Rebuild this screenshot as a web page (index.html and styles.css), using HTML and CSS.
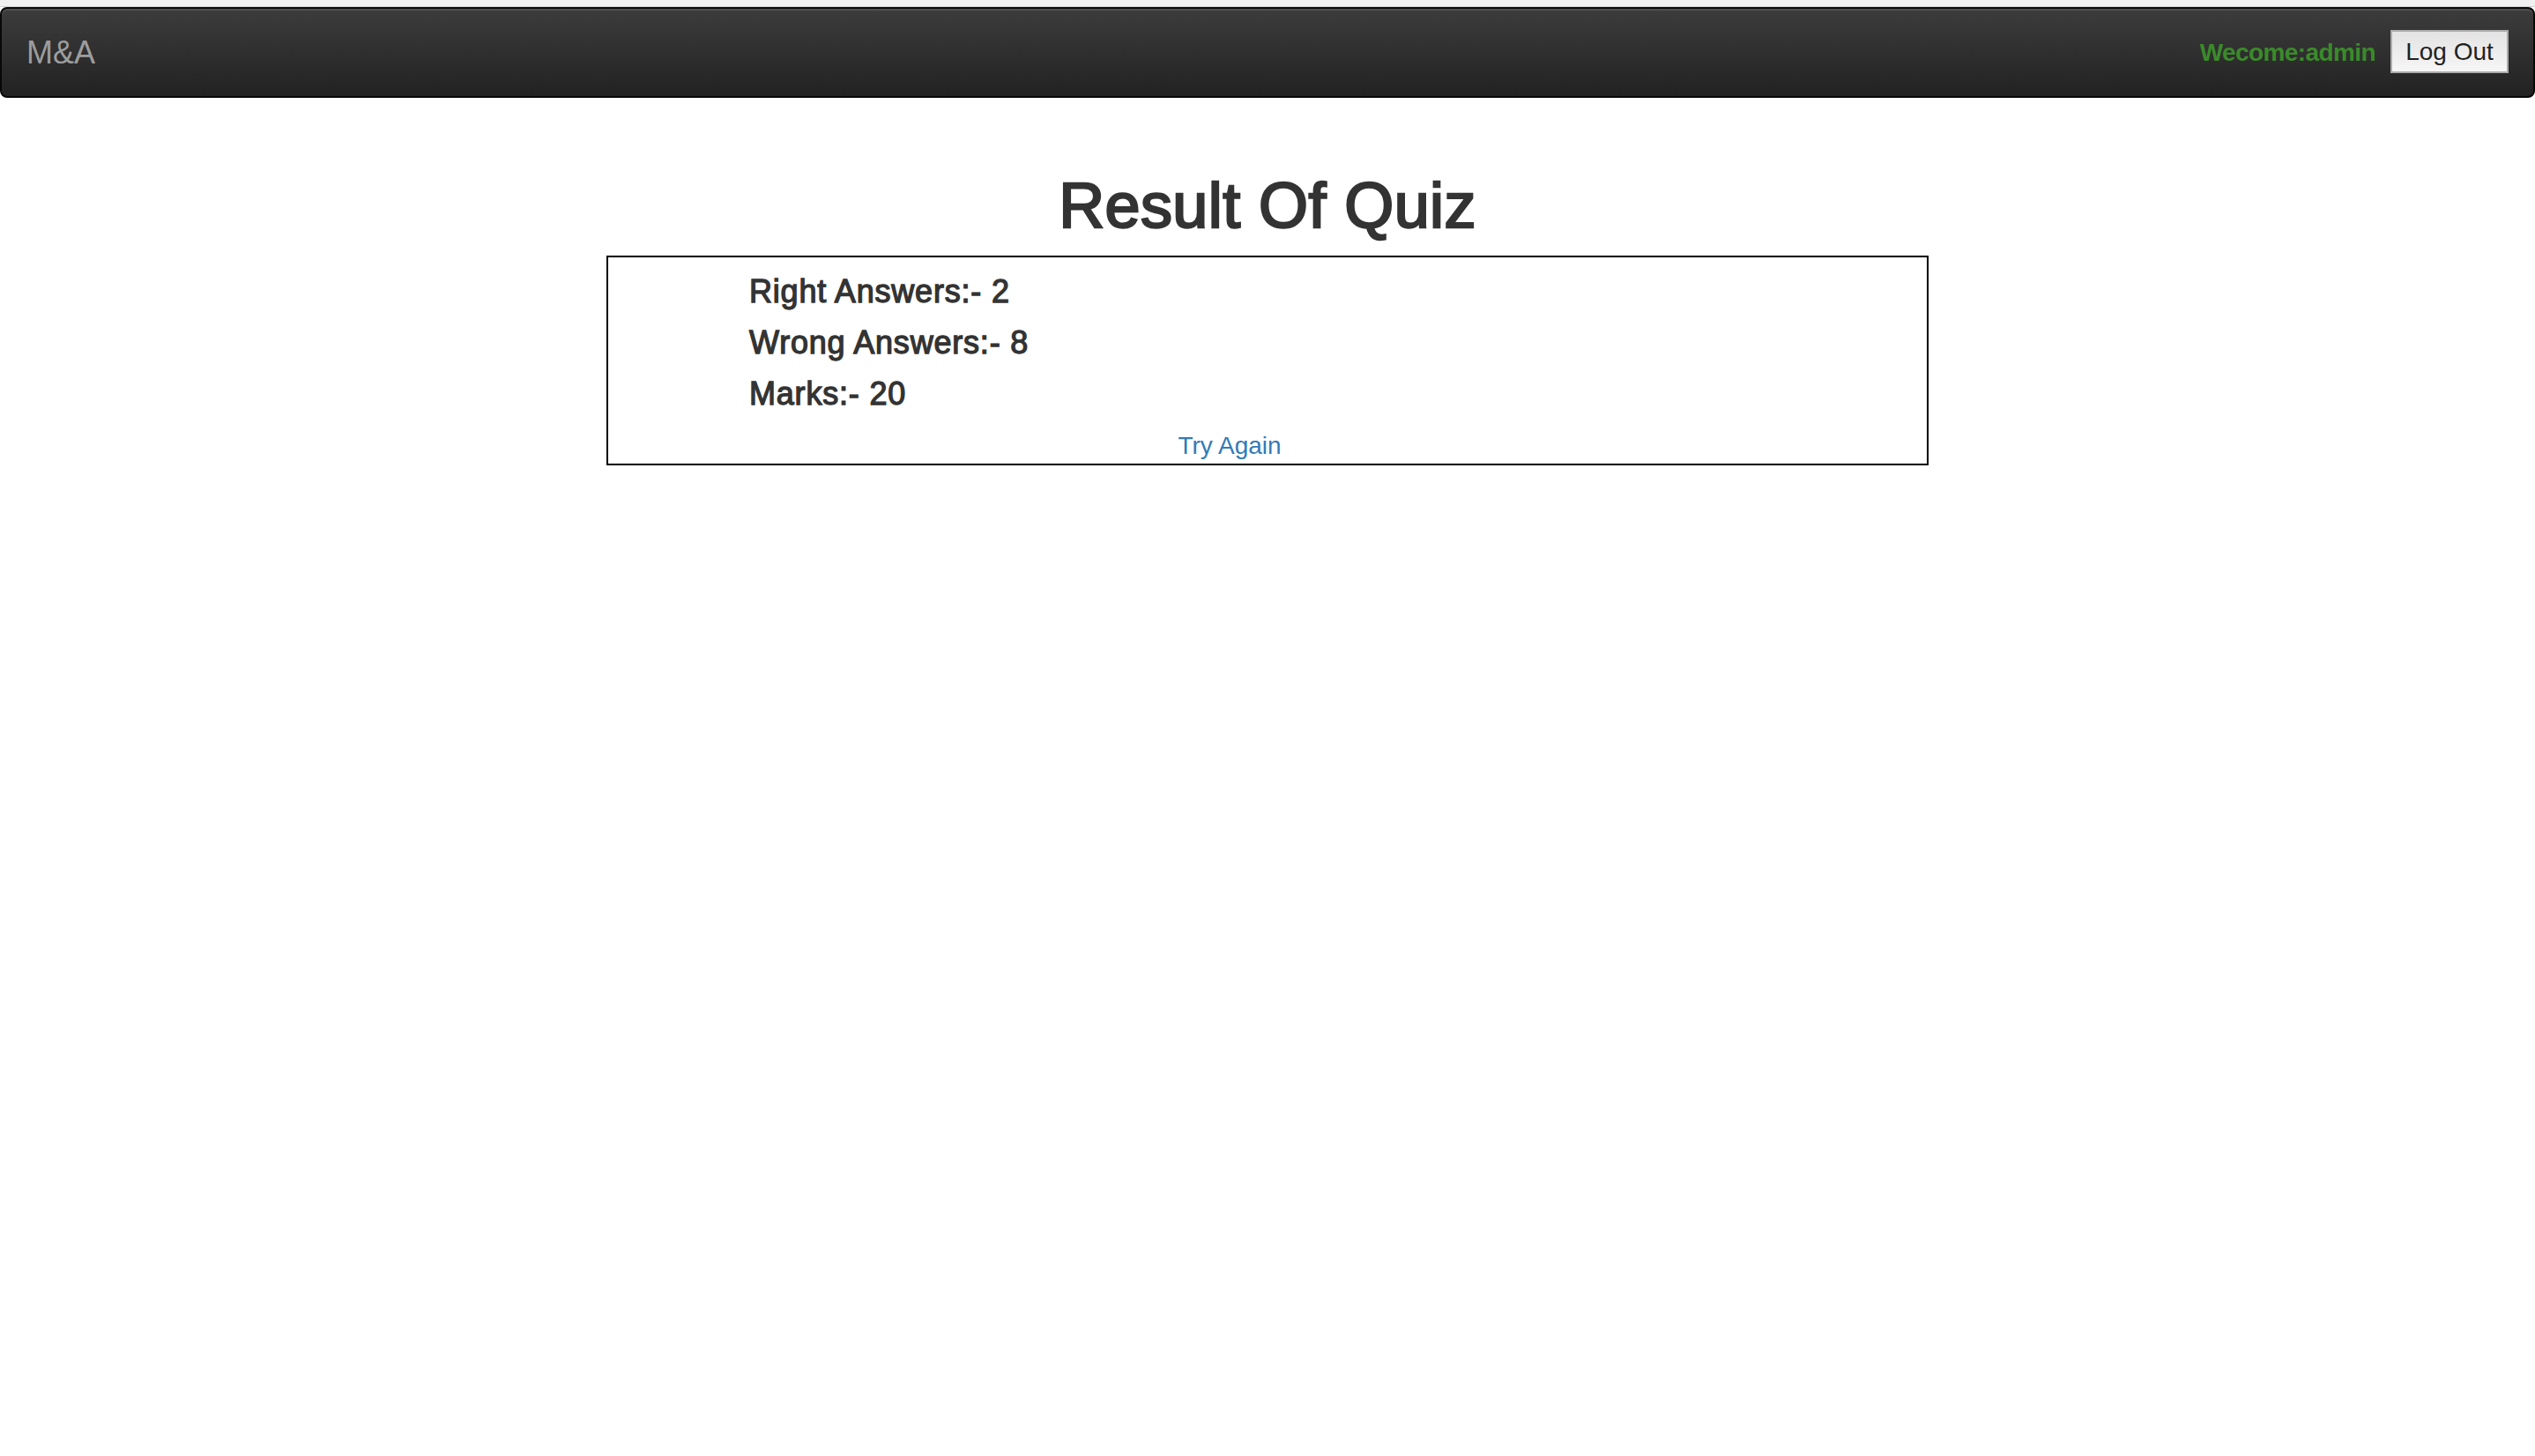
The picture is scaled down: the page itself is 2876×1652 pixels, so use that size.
FILE: index.html
```html
<!DOCTYPE html>
<html lang="en">
<head>
<meta charset="utf-8">
<title>Result Of Quiz</title>
<link rel="stylesheet" href="styles.css">
</head>
<body>
<div class="topstrip"></div>
<nav class="navbar">
  <a class="brand" href="#">M&amp;A</a>
  <div class="nav-right">
    <span class="welcome">Wecome:admin</span>
    <button class="logout" type="button">Log Out</button>
  </div>
</nav>
<main class="content">
  <h1 class="title">Result Of Quiz</h1>
  <section class="result-box">
    <h4 class="result-line">Right Answers:- 2</h4>
    <h4 class="result-line">Wrong Answers:- 8</h4>
    <h4 class="result-line">Marks:- 20</h4>
    <div class="retry"><a href="#">Try Again</a></div>
  </section>
</main>
</body>
</html>
```
FILE: styles.css
```css
html, body {
  margin: 0;
  padding: 0;
  background: #ffffff;
}
body {
  font-family: "Liberation Sans", Arial, Helvetica, sans-serif;
  color: #333333;
}
.topstrip {
  height: 7px;
  background: #f0f0f0;
  border-bottom: 1px solid #d2d2d2;
}
.navbar {
  display: flex;
  align-items: center;
  justify-content: space-between;
  height: 103px;
  box-sizing: border-box;
  border: 2px solid #080808;
  border-radius: 8px;
  background: linear-gradient(to bottom, #3c3c3c 0%, #222222 100%);
  box-shadow: inset 0 2px 0 rgba(255, 255, 255, 0.1);
  padding: 0 28px;
}
.brand {
  font-size: 36px;
  line-height: 40px;
  color: #9d9d9d;
  text-decoration: none;
}
.nav-right {
  display: flex;
  align-items: center;
  gap: 17px;
}
.welcome {
  font-size: 28px;
  line-height: 40px;
  font-weight: bold;
  color: #3b8a2b;
  letter-spacing: -0.6px;
}
.logout {
  width: 134px;
  height: 49px;
  box-sizing: border-box;
  margin: 0 0 2px 0;
  padding: 0;
  border: 2px solid #ababab;
  border-radius: 0;
  background: linear-gradient(to bottom, #e3e3e3 0%, #f6f6f6 100%);
  font-family: "Liberation Sans", Arial, Helvetica, sans-serif;
  font-size: 28px;
  color: #222222;
}
.content {
  display: block;
}
.title {
  margin: 82px 0 17px;
  font-size: 72px;
  line-height: 80px;
  font-weight: 500;
  letter-spacing: 0.4px;
  text-align: center;
  color: #333333;
  -webkit-text-stroke: 2.4px #333333;
}
.result-box {
  width: 1500px;
  box-sizing: border-box;
  margin: 0 auto;
  border: 2px solid #000000;
}
.result-line {
  margin: 20px 0 20px 0;
  padding-left: 160px;
  font-size: 36px;
  line-height: 38px;
  font-weight: 500;
  letter-spacing: 0.8px;
  color: #333333;
  -webkit-text-stroke: 1.3px #333333;
}
.retry {
  text-align: center;
  padding-right: 86px;
  font-size: 28px;
  line-height: 40px;
}
.retry a {
  color: #337ab7;
  text-decoration: none;
}
```
